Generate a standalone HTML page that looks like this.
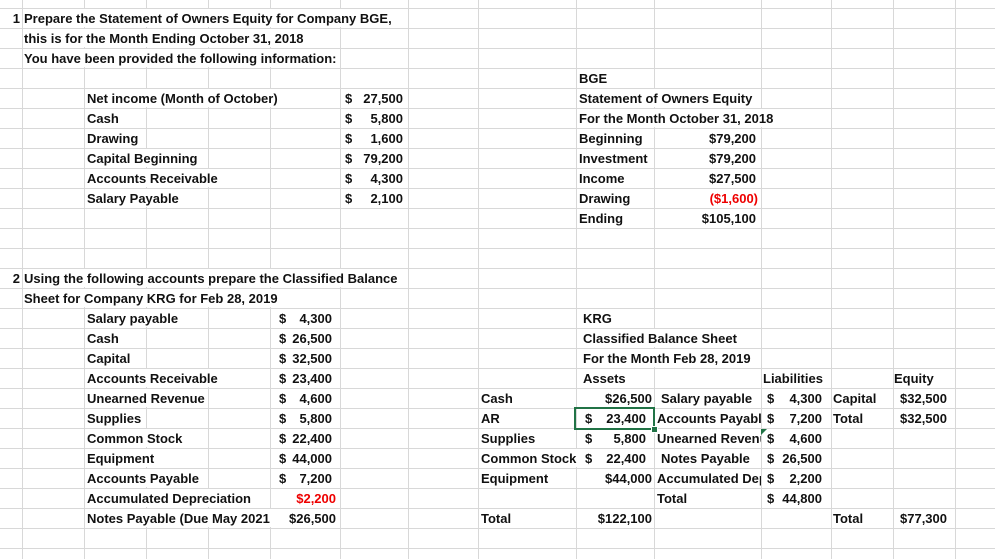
<!DOCTYPE html>
<html><head><meta charset="utf-8"><style>
body{margin:0;width:995px;height:559px;background:#fff;overflow:hidden;position:relative;font:bold 13px "Liberation Sans",sans-serif;color:#111}
.t{position:absolute;height:18px;line-height:19px;white-space:nowrap}
.b{background:#fff;padding-right:1px}
.r{text-align:right}
.red{color:#e00}
svg{position:absolute;left:0;top:0}
</style></head><body>
<svg width="995" height="559">
<g stroke="#d8d8d8" stroke-width="1">
<line x1="0" y1="8.5" x2="995" y2="8.5"/><line x1="0" y1="28.5" x2="995" y2="28.5"/><line x1="0" y1="48.5" x2="995" y2="48.5"/><line x1="0" y1="68.5" x2="995" y2="68.5"/><line x1="0" y1="88.5" x2="995" y2="88.5"/><line x1="0" y1="108.5" x2="995" y2="108.5"/><line x1="0" y1="128.5" x2="995" y2="128.5"/><line x1="0" y1="148.5" x2="995" y2="148.5"/><line x1="0" y1="168.5" x2="995" y2="168.5"/><line x1="0" y1="188.5" x2="995" y2="188.5"/><line x1="0" y1="208.5" x2="995" y2="208.5"/><line x1="0" y1="228.5" x2="995" y2="228.5"/><line x1="0" y1="248.5" x2="995" y2="248.5"/><line x1="0" y1="268.5" x2="995" y2="268.5"/><line x1="0" y1="288.5" x2="995" y2="288.5"/><line x1="0" y1="308.5" x2="995" y2="308.5"/><line x1="0" y1="328.5" x2="995" y2="328.5"/><line x1="0" y1="348.5" x2="995" y2="348.5"/><line x1="0" y1="368.5" x2="995" y2="368.5"/><line x1="0" y1="388.5" x2="995" y2="388.5"/><line x1="0" y1="408.5" x2="995" y2="408.5"/><line x1="0" y1="428.5" x2="995" y2="428.5"/><line x1="0" y1="448.5" x2="995" y2="448.5"/><line x1="0" y1="468.5" x2="995" y2="468.5"/><line x1="0" y1="488.5" x2="995" y2="488.5"/><line x1="0" y1="508.5" x2="995" y2="508.5"/><line x1="0" y1="528.5" x2="995" y2="528.5"/><line x1="0" y1="548.5" x2="995" y2="548.5"/>
<line x1="22.5" y1="0" x2="22.5" y2="559"/><line x1="84.5" y1="0" x2="84.5" y2="559"/><line x1="146.5" y1="0" x2="146.5" y2="559"/><line x1="208.5" y1="0" x2="208.5" y2="559"/><line x1="270.5" y1="0" x2="270.5" y2="559"/><line x1="340.5" y1="0" x2="340.5" y2="559"/><line x1="408.5" y1="0" x2="408.5" y2="559"/><line x1="478.5" y1="0" x2="478.5" y2="559"/><line x1="576.5" y1="0" x2="576.5" y2="559"/><line x1="654.5" y1="0" x2="654.5" y2="559"/><line x1="761.5" y1="0" x2="761.5" y2="559"/><line x1="831.5" y1="0" x2="831.5" y2="559"/><line x1="893.5" y1="0" x2="893.5" y2="559"/><line x1="955.5" y1="0" x2="955.5" y2="559"/>
</g></svg>

<div class="t r" style="left:0;width:20px;top:9px">1</div>
<div class="t b" style="left:24px;top:9px">Prepare the Statement of Owners Equity for Company BGE,</div>
<div class="t b" style="left:24px;top:29px">this is for the Month Ending October 31, 2018</div>
<div class="t b" style="left:24px;top:49px">You have been provided the following information:</div>

<div class="t b" style="left:87px;top:89px">Net income (Month of October)</div>
<div class="t b" style="left:87px;top:109px">Cash</div>
<div class="t b" style="left:87px;top:129px">Drawing</div>
<div class="t b" style="left:87px;top:149px">Capital Beginning</div>
<div class="t b" style="left:87px;top:169px">Accounts Receivable</div>
<div class="t b" style="left:87px;top:189px">Salary Payable</div>

<div class="t" style="left:345px;top:89px">$</div><div class="t r" style="left:340px;width:63px;top:89px">27,500</div>
<div class="t" style="left:345px;top:109px">$</div><div class="t r" style="left:340px;width:63px;top:109px">5,800</div>
<div class="t" style="left:345px;top:129px">$</div><div class="t r" style="left:340px;width:63px;top:129px">1,600</div>
<div class="t" style="left:345px;top:149px">$</div><div class="t r" style="left:340px;width:63px;top:149px">79,200</div>
<div class="t" style="left:345px;top:169px">$</div><div class="t r" style="left:340px;width:63px;top:169px">4,300</div>
<div class="t" style="left:345px;top:189px">$</div><div class="t r" style="left:340px;width:63px;top:189px">2,100</div>

<div class="t b" style="left:579px;top:69px">BGE</div>
<div class="t b" style="left:579px;top:89px">Statement of Owners Equity</div>
<div class="t b" style="left:579px;top:109px">For the Month October 31, 2018</div>
<div class="t b" style="left:579px;top:129px">Beginning</div>
<div class="t b" style="left:579px;top:149px">Investment</div>
<div class="t b" style="left:579px;top:169px">Income</div>
<div class="t b" style="left:579px;top:189px">Drawing</div>
<div class="t b" style="left:579px;top:209px">Ending</div>
<div class="t r" style="left:654px;width:102px;top:129px">$79,200</div>
<div class="t r" style="left:654px;width:102px;top:149px">$79,200</div>
<div class="t r" style="left:654px;width:102px;top:169px">$27,500</div>
<div class="t r red" style="left:654px;width:104px;top:189px">($1,600)</div>
<div class="t r" style="left:654px;width:102px;top:209px">$105,100</div>

<div class="t r" style="left:0;width:20px;top:269px">2</div>
<div class="t b" style="left:24px;top:269px">Using the following accounts prepare the Classified Balance</div>
<div class="t b" style="left:24px;top:289px">Sheet for Company KRG for Feb 28, 2019</div>

<div class="t b" style="left:87px;top:309px">Salary payable</div>
<div class="t b" style="left:87px;top:329px">Cash</div>
<div class="t b" style="left:87px;top:349px">Capital</div>
<div class="t b" style="left:87px;top:369px">Accounts Receivable</div>
<div class="t b" style="left:87px;top:389px">Unearned Revenue</div>
<div class="t b" style="left:87px;top:409px">Supplies</div>
<div class="t b" style="left:87px;top:429px">Common Stock</div>
<div class="t b" style="left:87px;top:449px">Equipment</div>
<div class="t b" style="left:87px;top:469px">Accounts Payable</div>
<div class="t b" style="left:87px;top:489px">Accumulated Depreciation</div>
<div class="t b" style="left:87px;top:509px">Notes Payable (Due May 2021</div>

<div class="t" style="left:279px;top:309px">$</div><div class="t r" style="left:270px;width:62px;top:309px">4,300</div>
<div class="t" style="left:279px;top:329px">$</div><div class="t r" style="left:270px;width:62px;top:329px">26,500</div>
<div class="t" style="left:279px;top:349px">$</div><div class="t r" style="left:270px;width:62px;top:349px">32,500</div>
<div class="t" style="left:279px;top:369px">$</div><div class="t r" style="left:270px;width:62px;top:369px">23,400</div>
<div class="t" style="left:279px;top:389px">$</div><div class="t r" style="left:270px;width:62px;top:389px">4,600</div>
<div class="t" style="left:279px;top:409px">$</div><div class="t r" style="left:270px;width:62px;top:409px">5,800</div>
<div class="t" style="left:279px;top:429px">$</div><div class="t r" style="left:270px;width:62px;top:429px">22,400</div>
<div class="t" style="left:279px;top:449px">$</div><div class="t r" style="left:270px;width:62px;top:449px">44,000</div>
<div class="t" style="left:279px;top:469px">$</div><div class="t r" style="left:270px;width:62px;top:469px">7,200</div>
<div class="t r red" style="left:270px;width:66px;top:489px">$2,200</div>
<div class="t r" style="left:270px;width:66px;top:509px">$26,500</div>

<div class="t b" style="left:583px;top:309px">KRG</div>
<div class="t b" style="left:583px;top:329px">Classified Balance Sheet</div>
<div class="t b" style="left:583px;top:349px">For the Month Feb 28, 2019</div>
<div class="t b" style="left:583px;top:369px">Assets</div>
<div class="t b" style="left:763px;top:369px">Liabilities</div>
<div class="t b" style="left:894px;top:369px">Equity</div>

<div class="t" style="left:481px;top:389px">Cash</div>
<div class="t" style="left:481px;top:409px">AR</div>
<div class="t" style="left:481px;top:429px">Supplies</div>
<div class="t b" style="left:481px;top:449px">Common Stock</div>
<div class="t" style="left:481px;top:469px">Equipment</div>
<div class="t" style="left:481px;top:509px">Total</div>

<div class="t r" style="left:576px;width:76px;top:389px">$26,500</div>
<div class="t" style="left:585px;top:409px">$</div><div class="t r" style="left:576px;width:70px;top:409px">23,400</div>
<div class="t" style="left:585px;top:429px">$</div><div class="t r" style="left:576px;width:70px;top:429px">5,800</div>
<div class="t" style="left:585px;top:449px">$</div><div class="t r" style="left:576px;width:70px;top:449px">22,400</div>
<div class="t r" style="left:576px;width:76px;top:469px">$44,000</div>
<div class="t r" style="left:576px;width:76px;top:509px">$122,100</div>

<div class="t" style="left:655px;width:106px;overflow:hidden;top:389px;padding-left:6px;box-sizing:border-box;background:#fff">Salary payable</div>
<div class="t" style="left:655px;width:106px;overflow:hidden;top:409px;padding-left:2px;box-sizing:border-box;background:#fff">Accounts Payable</div>
<div class="t" style="left:655px;width:106px;overflow:hidden;top:429px;padding-left:2px;box-sizing:border-box;background:#fff">Unearned Revenue</div>
<div class="t" style="left:655px;width:106px;overflow:hidden;top:449px;padding-left:6px;box-sizing:border-box;background:#fff">Notes Payable</div>
<div class="t" style="left:655px;width:106px;overflow:hidden;top:469px;padding-left:2px;box-sizing:border-box;background:#fff">Accumulated Depreciation</div>
<div class="t" style="left:657px;top:489px">Total</div>

<div class="t" style="left:767px;top:389px">$</div><div class="t r" style="left:761px;width:61px;top:389px">4,300</div>
<div class="t" style="left:767px;top:409px">$</div><div class="t r" style="left:761px;width:61px;top:409px">7,200</div>
<div class="t" style="left:767px;top:429px">$</div><div class="t r" style="left:761px;width:61px;top:429px">4,600</div>
<div class="t" style="left:767px;top:449px">$</div><div class="t r" style="left:761px;width:61px;top:449px">26,500</div>
<div class="t" style="left:767px;top:469px">$</div><div class="t r" style="left:761px;width:61px;top:469px">2,200</div>
<div class="t" style="left:767px;top:489px">$</div><div class="t r" style="left:761px;width:61px;top:489px">44,800</div>

<div class="t" style="left:833px;top:389px">Capital</div>
<div class="t" style="left:833px;top:409px">Total</div>
<div class="t" style="left:833px;top:509px">Total</div>
<div class="t r" style="left:893px;width:54px;top:389px">$32,500</div>
<div class="t r" style="left:893px;width:54px;top:409px">$32,500</div>
<div class="t r" style="left:893px;width:54px;top:509px">$77,300</div>

<div style="position:absolute;left:574px;top:407px;width:77px;height:19px;border:2px solid #217346"></div>
<div style="position:absolute;left:651px;top:426px;width:5px;height:5px;background:#217346;border:1px solid #fff"></div>
<svg width="995" height="559" style="pointer-events:none"><polygon points="761,429 767,429 761,435" fill="#217346"/></svg>
</body></html>
